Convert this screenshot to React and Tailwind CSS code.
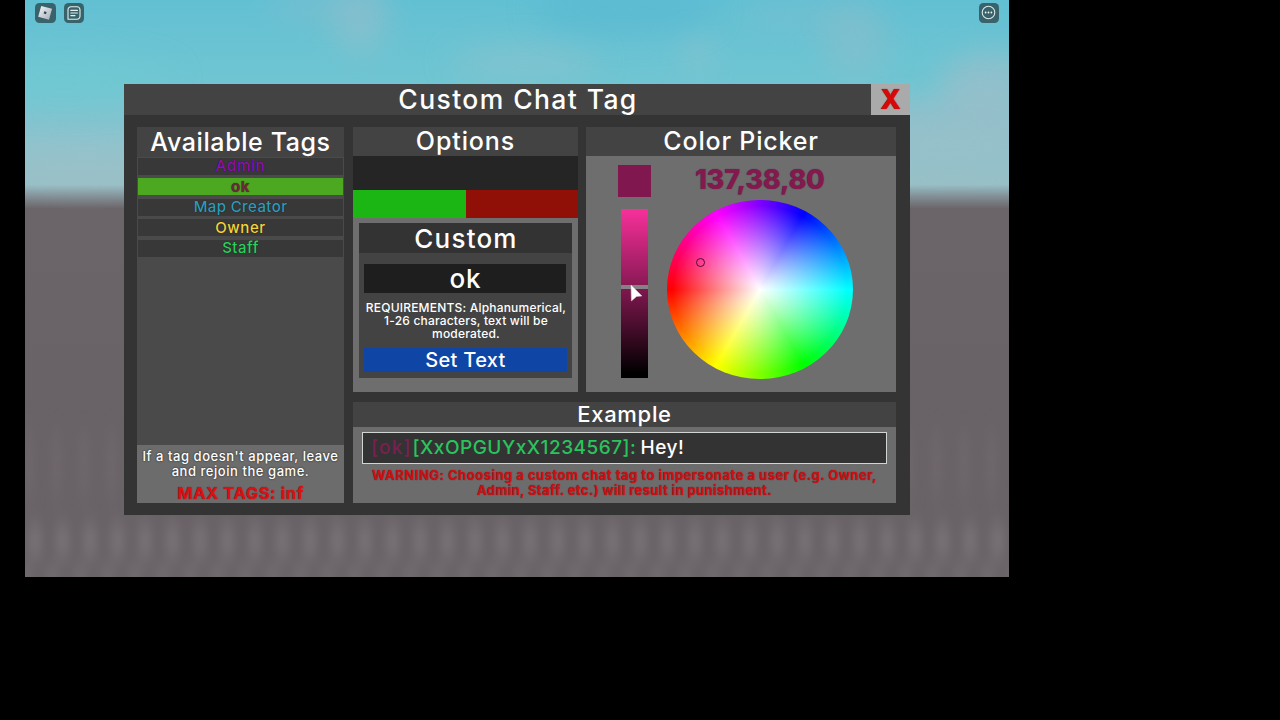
const tags = [
  { name: "Admin", color: "text-[#8f0fb8] tracking-[0.8px]" },
  { name: "ok", color: "text-[#6a2a3c] font-bold tracking-[0.5px]", selected: true },
  { name: "Map Creator", color: "text-[#2f9bb8] tracking-[0.4px]" },
  { name: "Owner", color: "text-[#f5d43a] tracking-[0.6px]" },
  { name: "Staff", color: "text-[#2bd05c] tracking-[0.5px]" },
];

const clouds = [
  [335, 20, 28, 34, "#a3bfc9", 0.45],
  [300, 5, 60, 14, "#93bccb", 0.4],
  [500, 62, 75, 16, "#8fc2cd", 0.6],
  [672, 52, 14, 14, "#9cc2cd", 0.6],
  [830, 40, 34, 36, "#98bcc8", 0.4],
  [780, 15, 70, 10, "#8fbecb", 0.4],
  [965, 85, 50, 32, "#a5bdc8", 0.6],
  [930, 130, 90, 30, "#a1bcc6", 0.5],
  [40, 80, 110, 24, "#6fcad3", 0.6],
  [60, 165, 70, 18, "#a7c1c8", 0.3],
  [600, 10, 90, 25, "#58b8d2", 0.6],
];

const stripes = Array.from({ length: 37 }, (_, i) => i * 27.5);

function Background() {
  return (
    <svg className="absolute inset-0" width="984" height="577" viewBox="0 0 984 577">
      <defs>
        <linearGradient id="world" x1="0" y1="0" x2="0" y2="1">
          <stop offset="0" stopColor="#62c0d3" />
          <stop offset="0.14" stopColor="#70c5d2" />
          <stop offset="0.25" stopColor="#8ec3cd" />
          <stop offset="0.32" stopColor="#98bfc6" />
          <stop offset="0.343" stopColor="#7f8a90" />
          <stop offset="0.362" stopColor="#6b6468" />
          <stop offset="0.7" stopColor="#696266" />
          <stop offset="1" stopColor="#696267" />
        </linearGradient>
        <filter id="cloud" x="-80%" y="-120%" width="260%" height="340%">
          <feGaussianBlur stdDeviation="15" />
        </filter>
        <filter id="ground" x="-20%" y="-30%" width="140%" height="160%">
          <feGaussianBlur stdDeviation="5 10" />
        </filter>
      </defs>
      <rect width="984" height="577" fill="url(#world)" />
      {clouds.map(([x, y, rx, ry, fill, opacity]) => (
        <ellipse key={`${x}-${y}`} cx={x} cy={y} rx={rx} ry={ry} fill={fill} opacity={opacity} filter="url(#cloud)" />
      ))}
      <g fill="#8a8388" opacity="0.5" filter="url(#ground)">
        {stripes.map((x) => (
          <g key={x}>
            <ellipse cx={x + 10} cy="541" rx="7" ry="18" />
            <ellipse cx={x} cy="577" rx="7" ry="8" />
            <ellipse cx={x + 4} cy="465" rx="4" ry="40" opacity="0.4" />
          </g>
        ))}
      </g>
    </svg>
  );
}

function TopBar() {
  return (
    <div className="relative flex h-[84px] items-start gap-[8px] pl-[10px] pr-[10px] pt-[2.5px]">
      <div className="flex size-[20.5px] items-center justify-center rounded-[4.5px] bg-[#38636b]">
        <svg width="16" height="16" viewBox="0 0 16 16">
          <defs>
            <linearGradient id="logo" x1="0" y1="0" x2="1" y2="1">
              <stop offset="0" stopColor="#f3f5f8" />
              <stop offset="1" stopColor="#a7adb6" />
            </linearGradient>
          </defs>
          <path d="M4.2 0.9 L15 3.8 L12 14.7 L1.2 11.8 Z" fill="url(#logo)" />
          <path d="M7.3 6.3 L9.6 6.9 L9 9.2 L6.7 8.6 Z" fill="#2f4a53" />
        </svg>
      </div>
      <div className="flex size-[20.5px] items-center justify-center rounded-[4.5px] bg-[#38636b]">
        <svg width="14" height="14" viewBox="0 0 14 14" fill="none" stroke="#e6f0f1" strokeWidth="1.1" strokeLinecap="round">
          <path d="M4 0.8 H10 A3 3 0 0 1 13 3.8 V10.2 A3 3 0 0 1 10 13.2 H1 V3.8 A3 3 0 0 1 4 0.8 Z" strokeLinejoin="round" />
          <path d="M3.8 4.4 H10.4 M3.8 7 H10.4 M3.8 9.6 H8" />
        </svg>
      </div>
      <div className="ml-auto flex size-[20.5px] items-center justify-center rounded-[4.5px] bg-[#38636b]">
        <svg width="15" height="15" viewBox="0 0 15 15">
          <circle cx="7.5" cy="7.5" r="6.3" fill="none" stroke="#dbe8ea" strokeWidth="1.1" />
          <circle cx="4.6" cy="7.5" r="0.9" fill="#f0f6f6" />
          <circle cx="7.5" cy="7.5" r="0.9" fill="#f0f6f6" />
          <circle cx="10.4" cy="7.5" r="0.9" fill="#f0f6f6" />
        </svg>
      </div>
    </div>
  );
}

function AvailableTags() {
  return (
    <div className="flex w-[207px] flex-col bg-[#4a4a4a]">
      <h2 className="flex h-[30px] items-center justify-center bg-[#434343] pt-px text-[25px] tracking-[0.6px]">
        Available Tags
      </h2>
      <div className="flex flex-col gap-[3.5px] px-px pt-[0.5px]">
        {tags.map((tag) => (
          <div
            key={tag.name}
            className={`flex h-[17px] items-center justify-center pt-px text-[15px] [text-shadow:0_0_1px_rgba(0,0,0,0.7)] ${tag.color} ${tag.selected ? "bg-[#4ca820]" : "bg-[#383838]"}`}
          >
            {tag.name}
          </div>
        ))}
      </div>
      <div className="mt-auto h-[58px] bg-[#6c6c6c] pt-[4px] text-center">
        <p className="whitespace-nowrap text-[13px] leading-[15px] tracking-[0.55px] [text-shadow:0_0_2px_rgba(0,0,0,0.8)]">
          If a tag doesn't appear, leave
          <br />
          and rejoin the game.
        </p>
        <p className="mt-[4px] text-[16.5px] leading-[20px] font-bold tracking-[0.6px] text-[#dc1014] [text-shadow:0_0_1px_#6a0a0c]">
          MAX TAGS: inf
        </p>
      </div>
    </div>
  );
}

function Options() {
  return (
    <div className="w-[225px] bg-[#6e6e6e]">
      <h2 className="flex h-[29px] items-center justify-center bg-[#434343] text-[25px] tracking-[0.9px]">
        Options
      </h2>
      <div className="h-[33.5px] bg-[#252525]" />
      <div className="flex h-[28.5px]">
        <div className="w-[113px] bg-[#1bb514]" />
        <div className="flex-1 bg-[#900f07]" />
      </div>
      <div className="mx-[6px] mt-[5px] h-[155px] bg-[#434343] text-center">
        <h3 className="flex h-[30px] items-center justify-center bg-[#333333] pl-px text-[26px] tracking-[1.2px]">
          Custom
        </h3>
        <div className="ml-[5px] mr-[6px] mt-[11px] flex h-[29px] items-center justify-center bg-[#1e1e1e] pl-px text-[26px] tracking-[0.8px]">
          ok
        </div>
        <p className="mt-[8px] whitespace-nowrap pl-px text-[12px] leading-[13px] tracking-[0.2px]">
          REQUIREMENTS: Alphanumerical,
          <br />
          1-26 characters, text will be
          <br />
          moderated.
        </p>
        <div className="mx-[5px] mt-[8px] flex h-[23.5px] items-center justify-center bg-[#0f45a5] text-[20px] tracking-[0.3px]">
          Set Text
        </div>
      </div>
    </div>
  );
}

function ColorPicker() {
  return (
    <div className="flex w-[310px] flex-col bg-[#6e6e6e]">
      <h2 className="flex h-[29px] shrink-0 items-center justify-center bg-[#434343] pt-px text-[25px] tracking-[0.8px]">
        Color Picker
      </h2>
      <div className="flex pl-[31.5px] pt-[9px]">
        <div className="flex w-[33.5px] flex-col items-center">
          <div className="h-[32px] w-full bg-[#81174f]" />
          <div className="relative mt-[12px] w-[27.5px]">
            <div className="h-[76px] bg-linear-to-b/srgb from-[#f7309a] to-[#8a1955]" />
            <div className="h-[4px] bg-[#858285]" />
            <div className="h-[89px] bg-linear-to-b/srgb from-[#80174f] to-black to-95%" />
            <svg className="absolute left-[9px] top-[75px]" width="14" height="18" viewBox="0 0 14 18">
              <path d="M1 1 L12 12 L6.6 12.4 L1.4 17 Z" fill="#ffffff" stroke="#d8d0d4" strokeWidth="0.5" />
            </svg>
          </div>
        </div>
        <div className="ml-[16px] w-[185.5px]">
          <div className="flex h-[35px] items-center justify-center pb-[4px] text-[27px] font-extrabold tracking-[-0.2px] text-[#84194f] [text-shadow:0_0_1px_rgba(50,10,30,0.7)]">
            137,38,80
          </div>
          <div className="relative h-[179px] w-full rounded-[50%] bg-[radial-gradient(closest-side,#fff_0%,rgba(255,255,255,0)_94%),conic-gradient(from_30deg,#0000ff,#00ffff_60deg,#00ff00_120deg,#ffff00_180deg,#ff0000_240deg,#ff00ff_300deg,#0000ff_360deg)]">
            <div className="absolute left-[28.5px] top-[57.5px] size-[9px] rounded-full border-[1.3px] border-[#4a0f38]" />
          </div>
        </div>
      </div>
    </div>
  );
}

function Example() {
  return (
    <div className="h-[101px] bg-[#6c6c6c]">
      <h2 className="flex h-[25px] items-center justify-center bg-[#434343] text-[22px] tracking-[0.7px]">
        Example
      </h2>
      <div className="mx-[9px] mt-[5px] flex h-[32px] items-center whitespace-pre border border-[#d2d6d2] bg-[#333333] pl-[8px] pt-px text-[19px]">
        <span className="w-[41.5px] tracking-[1.2px] text-[#7a1f52]">[ok]</span>
        <span className="w-[228px] tracking-[0.5px] text-[#2ac45e]">[XxOPGUYxX1234567]:</span>
        <span className="tracking-[0.5px]">Hey!</span>
      </div>
      <p className="mt-[4px] text-center text-[13px] leading-[15px] font-bold tracking-[0.5px] whitespace-nowrap text-[#cc1015] [text-shadow:0_0_1px_#700a0c]">
        WARNING: Choosing a custom chat tag to impersonate a user (e.g. Owner,
        <br />
        <span className="tracking-[0.4px]">Admin, Staff. etc.) will result in punishment.</span>
      </p>
    </div>
  );
}

export default function App() {
  return (
    <div className="h-[720px] w-[1280px] overflow-hidden bg-black pl-[25px] font-['Inter',sans-serif] font-medium text-white">
      <div className="relative h-[577px] w-[984px] overflow-hidden">
        <Background />
        <TopBar />
        <div className="relative ml-[99px] h-[431px] w-[786px] bg-[#343434]">
          <div className="flex h-[31px] bg-[#434343]">
            <h1 className="flex flex-1 items-center justify-center pl-[41px] text-[26.5px] tracking-[1.4px]">
              Custom Chat Tag
            </h1>
            <button className="flex w-[39px] items-center justify-center bg-[#aaaaaa] pt-[2px] text-[27px] font-extrabold text-[#d80808] [text-shadow:0_0_1px_#7a0000]">
              X
            </button>
          </div>
          <div className="flex gap-[9px] pl-[13px] pt-[12px]">
            <AvailableTags />
            <div className="flex w-[543px] flex-col gap-[10px]">
              <div className="flex h-[265px] gap-[8px]">
                <Options />
                <ColorPicker />
              </div>
              <Example />
            </div>
          </div>
        </div>
      </div>
    </div>
  );
}
